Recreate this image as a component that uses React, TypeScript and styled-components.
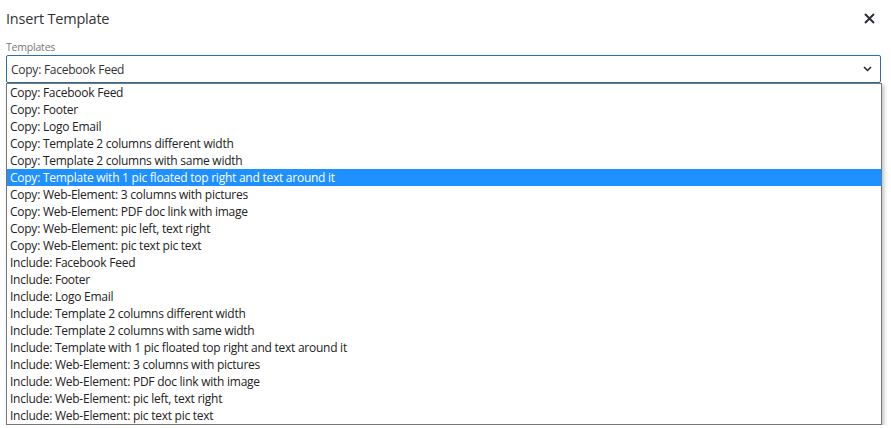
import React from 'react';
import styled, { createGlobalStyle } from 'styled-components';

const GlobalStyle = createGlobalStyle`
  html, body {
    margin: 0;
    padding: 0;
    background: #fff;
    font-family: "Open Sans", "Noto Sans", sans-serif;
    overflow: hidden;
  }
`;

const Dialog = styled.div`
  width: 891px;
  box-sizing: border-box;
  padding: 6px 10px 0 6px;
  display: flex;
  flex-direction: column;
`;

const Header = styled.div`
  display: flex;
  flex-shrink: 0;
  align-items: center;
  justify-content: space-between;
  height: 24px;
  margin-bottom: 11px;
`;

const Title = styled.h1`
  margin: 0;
  font-size: 14.5px;
  font-weight: 400;
  color: #333;
  letter-spacing: -0.2px;
`;

const CloseButton = styled.button`
  border: 0;
  background: none;
  padding: 0;
  margin-right: 5px;
  width: 14px;
  height: 14px;
  display: flex;
  align-items: center;
  justify-content: center;
  cursor: pointer;
`;

const Label = styled.label`
  flex-shrink: 0;
  font-size: 10.5px;
  color: #777;
  line-height: 12px;
  margin-bottom: 2px;
  letter-spacing: -0.2px;
`;

const Field = styled.div`
  position: relative;
  flex-shrink: 0;
`;

const SelectBox = styled.div`
  height: 28px;
  box-sizing: border-box;
  border: 1px solid #2c6ea8;
  border-radius: 2px;
  display: flex;
  align-items: center;
  justify-content: space-between;
  padding: 0 8px 0 4px;
  font-size: 12px;
  color: #333;
  letter-spacing: -0.25px;
`;

const DropList = styled.ul`
  list-style: none;
  margin: 0;
  padding: 0;
  width: 876px;
  box-sizing: border-box;
  border: 1px solid #767676;
  background: #fff;
  box-shadow: 2px 2px 4px rgba(0, 0, 0, 0.25);
`;

const Option = styled.li<{ $active?: boolean }>`
  height: 17px;
  line-height: 17px;
  padding-left: 3px;
  font-size: 12px;
  letter-spacing: -0.25px;
  white-space: nowrap;
  color: ${({ $active }) => ($active ? '#fff' : '#222')};
  background: ${({ $active }) => ($active ? '#1e90ff' : 'transparent')};
`;

const templates = [
  'Copy: Facebook Feed',
  'Copy: Footer',
  'Copy: Logo Email',
  'Copy: Template 2 columns different width',
  'Copy: Template 2 columns with same width',
  'Copy: Template with 1 pic floated top right and text around it',
  'Copy: Web-Element: 3 columns with pictures',
  'Copy: Web-Element: PDF doc link with image',
  'Copy: Web-Element: pic left, text right',
  'Copy: Web-Element: pic text pic text',
  'Include: Facebook Feed',
  'Include: Footer',
  'Include: Logo Email',
  'Include: Template 2 columns different width',
  'Include: Template 2 columns with same width',
  'Include: Template with 1 pic floated top right and text around it',
  'Include: Web-Element: 3 columns with pictures',
  'Include: Web-Element: PDF doc link with image',
  'Include: Web-Element: pic left, text right',
  'Include: Web-Element: pic text pic text',
];

export default function App() {
  return (
    <>
      <GlobalStyle />
      <Dialog>
        <Header>
          <Title>Insert Template</Title>
          <CloseButton aria-label="Close">
            <svg width="11" height="11" viewBox="0 0 11 11">
              <path d="M1 1 L10 10 M10 1 L1 10" stroke="#2b2f36" strokeWidth="2" />
            </svg>
          </CloseButton>
        </Header>
        <Label>Templates</Label>
        <Field>
          <SelectBox>
            <span>Copy: Facebook Feed</span>
            <svg width="9" height="6" viewBox="0 0 9 6">
              <path d="M1 1 L4.5 4.5 L8 1" stroke="#222" strokeWidth="1.5" fill="none" />
            </svg>
          </SelectBox>
          <DropList>
            {templates.map((t, i) => (
              <Option key={t} $active={i === 5}>
                {t}
              </Option>
            ))}
          </DropList>
        </Field>
      </Dialog>
    </>
  );
}
